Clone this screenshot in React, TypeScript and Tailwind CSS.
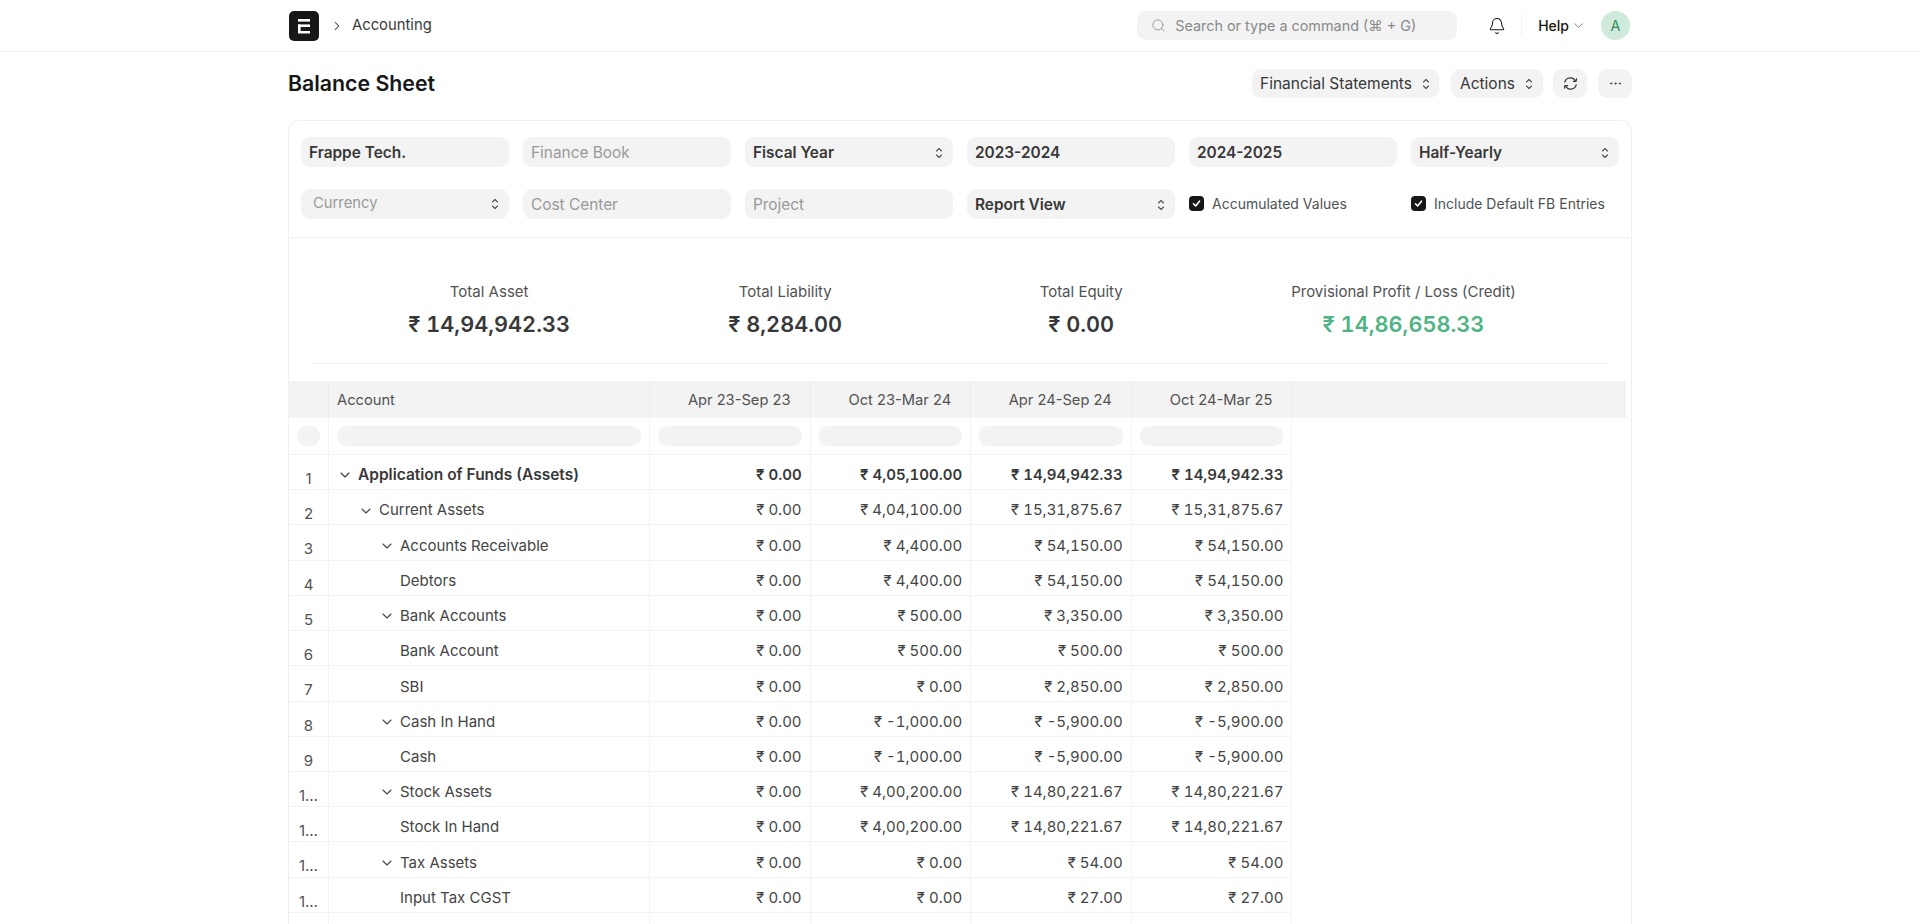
import { Bell, ChevronDown, ChevronRight, Ellipsis, Search } from "lucide-react";

const periods = ["Apr 23-Sep 23", "Oct 23-Mar 24", "Apr 24-Sep 24", "Oct 24-Mar 25"];

const rows = [
    { no: "1", name: "Application of Funds (Assets)", level: 0, parent: true, bold: true, values: ["₹ 0.00", "₹ 4,05,100.00", "₹ 14,94,942.33", "₹ 14,94,942.33"] },
    { no: "2", name: "Current Assets", level: 1, parent: true, values: ["₹ 0.00", "₹ 4,04,100.00", "₹ 15,31,875.67", "₹ 15,31,875.67"] },
    { no: "3", name: "Accounts Receivable", level: 2, parent: true, values: ["₹ 0.00", "₹ 4,400.00", "₹ 54,150.00", "₹ 54,150.00"] },
    { no: "4", name: "Debtors", level: 2, values: ["₹ 0.00", "₹ 4,400.00", "₹ 54,150.00", "₹ 54,150.00"] },
    { no: "5", name: "Bank Accounts", level: 2, parent: true, values: ["₹ 0.00", "₹ 500.00", "₹ 3,350.00", "₹ 3,350.00"] },
    { no: "6", name: "Bank Account", level: 2, values: ["₹ 0.00", "₹ 500.00", "₹ 500.00", "₹ 500.00"] },
    { no: "7", name: "SBI", level: 2, values: ["₹ 0.00", "₹ 0.00", "₹ 2,850.00", "₹ 2,850.00"] },
    { no: "8", name: "Cash In Hand", level: 2, parent: true, values: ["₹ 0.00", "₹ -1,000.00", "₹ -5,900.00", "₹ -5,900.00"] },
    { no: "9", name: "Cash", level: 2, values: ["₹ 0.00", "₹ -1,000.00", "₹ -5,900.00", "₹ -5,900.00"] },
    { no: "1…", name: "Stock Assets", level: 2, parent: true, values: ["₹ 0.00", "₹ 4,00,200.00", "₹ 14,80,221.67", "₹ 14,80,221.67"] },
    { no: "1…", name: "Stock In Hand", level: 2, values: ["₹ 0.00", "₹ 4,00,200.00", "₹ 14,80,221.67", "₹ 14,80,221.67"] },
    { no: "1…", name: "Tax Assets", level: 2, parent: true, values: ["₹ 0.00", "₹ 0.00", "₹ 54.00", "₹ 54.00"] },
    { no: "1…", name: "Input Tax CGST", level: 2, values: ["₹ 0.00", "₹ 0.00", "₹ 27.00", "₹ 27.00"] },
    { no: "", name: "", level: 2, values: ["", "", "", ""] },
];

const indents = ["pl-[8px]", "pl-[29px]", "pl-[50px]"];

const summary = [
    { label: "Total Asset", value: "₹ 14,94,942.33" },
    { label: "Total Liability", value: "₹ 8,284.00" },
    { label: "Total Equity", value: "₹ 0.00" },
    { label: "Provisional Profit / Loss (Credit)", value: "₹ 14,86,658.33", green: true },
];

function UpDown() {
    return (
        <svg width="8" height="14" viewBox="0 0 8 14" fill="none" stroke="#525252" strokeWidth="1.1" strokeLinecap="round" strokeLinejoin="round" className="shrink-0">
            <path d="M1.5 5 4 2.5 6.5 5" />
            <path d="M1.5 9 4 11.5 6.5 9" />
        </svg>
    );
}

function Refresh() {
    return (
        <svg width="17" height="17" viewBox="0 0 17 17" fill="none" stroke="#383838" strokeWidth="1.25" strokeLinecap="round" strokeLinejoin="round">
            <path d="M2.8 7.2A5.8 5.8 0 0 1 13.6 6.2" />
            <path d="M14.2 9.8A5.8 5.8 0 0 1 3.4 10.8" />
            <path d="M11.4 6.4h2.6l.6-2.5" />
            <path d="M5.6 10.6H3l-.6 2.5" />
        </svg>
    );
}

function Field({ text, placeholder, select, inset }: { text?: string; placeholder?: string; select?: boolean; inset?: boolean }) {
    return (
        <div className={`flex h-[30px] items-center justify-between rounded-[9px] bg-[#f3f3f3] pr-[10px] ${inset ? "pl-[12px] text-[14.8px]" : "pl-[8px] pt-[1px] text-[15.4px]"}`}>
            {text ? <span className="font-semibold text-[#383838]">{text}</span> : <span className={`text-[#999999] ${inset ? "pb-[2px]" : ""}`}>{placeholder}</span>}
            {select && <UpDown />}
        </div>
    );
}

function Check({ label }: { label: string }) {
    return (
        <label className="flex h-[30px] items-center gap-[8px] pb-[2px] text-[14px] text-[#525252]">
            <span className="flex size-[15px] items-center justify-center rounded-[4px] bg-[#171717]">
                <svg width="9" height="9" viewBox="0 0 9 9" fill="none" stroke="white" strokeWidth="1.6" strokeLinecap="round" strokeLinejoin="round">
                    <path d="M1.5 4.8 3.6 7 7.5 2.2" />
                </svg>
            </span>
            {label}
        </label>
    );
}

export default function App() {
    return (
        <div className="h-[924px] overflow-hidden bg-white font-['Inter',sans-serif] text-[#383838]">
            <header className="h-[52px] border-b border-[#f0f0f0]">
                <div className="mx-auto flex h-[51px] w-[1344px] items-center">
                    <div className="ml-[1px] flex size-[30px] items-center justify-center rounded-[5px] bg-[#171717]">
                        <svg width="14" height="16" viewBox="0 0 14 16" fill="white">
                            <rect x="1" y="1" width="12" height="2.6" />
                            <rect x="1" y="6.4" width="12" height="2.6" />
                            <path d="M1 6.4h2.6V13H13v2.6H1z" />
                        </svg>
                    </div>
                    <ChevronRight size={14} strokeWidth={1.8} className="ml-[11px] text-[#383838]" />
                    <span className="ml-[8px] text-[14.8px] text-[#383838]">Accounting</span>
                    <div className="ml-auto flex h-[29px] w-[320px] items-center gap-[9px] rounded-[9px] bg-[#f3f3f3] pl-[14px] text-[14.4px] text-[#8a8a8a]">
                        <Search size={15} strokeWidth={1.3} />
                        Search or type a command (⌘ + G)
                    </div>
                    <Bell size={18} strokeWidth={1.4} className="ml-[31px] text-[#171717]" />
                    <div className="ml-[15px] h-[23px] w-px bg-[#f0f0f0]" />
                    <span className="ml-[16px] text-[14px] font-medium text-[#171717]">Help</span>
                    <ChevronDown size={15} strokeWidth={1.1} className="ml-[2px] text-[#525252]" />
                    <div className="ml-[15px] mr-[2px] flex size-[29px] items-center justify-center rounded-full bg-[#cfe9da] text-[14.3px] text-[#30895c]">A</div>
                </div>
            </header>

            <main className="mx-auto w-[1344px]">
                <div className="flex h-[68px] items-center justify-between pb-[5px]">
                    <h1 className="text-[21.3px] font-semibold text-[#171717]">Balance Sheet</h1>
                    <div className="flex items-center gap-[10px] text-[15.5px] text-[#383838]">
                        <button className="mr-[2px] flex h-[29px] items-center gap-[10px] rounded-[9px] bg-[#f3f3f3] pl-[8px] pr-[9px]">Financial Statements <UpDown /></button>
                        <button className="flex h-[29px] items-center gap-[10px] rounded-[9px] bg-[#f3f3f3] pl-[9px] pr-[10px]">Actions <UpDown /></button>
                        <button className="flex h-[29px] w-[34px] items-center justify-center rounded-[9px] bg-[#f3f3f3]"><Refresh /></button>
                        <button className="ml-[1px] flex h-[29px] w-[34px] items-center justify-center rounded-[9px] bg-[#f3f3f3]"><Ellipsis size={15} strokeWidth={1.5} /></button>
                    </div>
                </div>

                <section className="rounded-t-[12px] border border-b-0 border-[#f0f0f0]">
                    <div className="grid h-[117px] grid-cols-6 content-start gap-x-[14px] gap-y-[22px] border-b border-[#f0f0f0] px-[12px] pt-[16px]">
                        <Field text="Frappe Tech." />
                        <Field placeholder="Finance Book" />
                        <Field text="Fiscal Year" select />
                        <Field text="2023-2024" />
                        <Field text="2024-2025" />
                        <Field text="Half-Yearly" select />
                        <Field placeholder="Currency" select inset />
                        <Field placeholder="Cost Center" />
                        <Field placeholder="Project" />
                        <Field text="Report View" select />
                        <Check label="Accumulated Values" />
                        <Check label="Include Default FB Entries" />
                    </div>

                    <div className="mx-[23px] flex h-[126px] justify-center gap-[120px] border-b border-[#f0f0f0] pr-[3px] pt-[44px]">
                        {summary.map((item, i) => (
                            <div key={item.label} className={`min-w-[176px] text-center ${i === 2 ? "mr-[2px]" : ""}`}>
                                <div className="text-[15px] leading-[20px] text-[#525252]">{item.label}</div>
                                <div className={`mt-[7px] text-[21.7px] font-semibold leading-[30px] tabular-nums ${item.green ? "text-[#4fb384]" : "text-[#383838]"}`}>{item.value}</div>
                            </div>
                        ))}
                    </div>

                    <div className="mt-[17px] text-[15px] text-[#444444]">
                        <div className="mr-[5px] grid h-[37px] grid-cols-[40px_321px_160.6px_160.6px_160.6px_160.6px_1fr] bg-[#f3f3f3] text-[14.7px] text-[#525252]">
                            <div className="border-r border-[#ededed]" />
                            <div className="flex items-center border-r border-[#ededed] pl-[8px] pt-[2px]">Account</div>
                            {periods.map((p) => (
                                <div key={p} className="flex items-center justify-end border-r border-[#ededed] pr-[19px] pt-[2px]">{p}</div>
                            ))}
                        </div>
                        <div className="grid h-[37px] w-[1003.4px] grid-cols-[40px_321px_160.6px_160.6px_160.6px_160.6px] border-b border-[#f3f3f3]">
                            {[0, 1, 2, 3, 4, 5].map((i) => (
                                <div key={i} className="flex items-center border-r border-[#f3f3f3] px-[8px]">
                                    <div className="h-[20px] w-full rounded-[9px] bg-[#f3f3f3]" />
                                </div>
                            ))}
                        </div>
                        {rows.map((row, i) => (
                            <div key={i} className={`grid h-[35.23px] w-[1003.4px] grid-cols-[40px_321px_160.6px_160.6px_160.6px_160.6px] border-b border-[#f3f3f3] ${row.bold ? "font-semibold text-[#383838]" : ""}`}>
                                <div className="border-r border-[#f3f3f3] pt-[10px] text-center text-[15px] font-normal leading-[27px] text-[#525252]">{row.no}</div>
                                <div className={`flex items-center border-r border-[#f3f3f3] ${indents[row.level]} ${row.bold ? "pt-[3px] text-[15.5px]" : "pt-[4px]"}`}>
                                    {row.parent ? <ChevronDown size={16} strokeWidth={1.6} className="mr-[5px] shrink-0" /> : <span className="w-[21px] shrink-0" />}
                                    {row.name}
                                </div>
                                {row.values.map((v, j) => (
                                    <div key={j} className="flex items-center justify-end border-r border-[#f3f3f3] pr-[8px] pt-[4px] tabular-nums">{v}</div>
                                ))}
                            </div>
                        ))}
                    </div>
                </section>
            </main>
        </div>
    );
}
